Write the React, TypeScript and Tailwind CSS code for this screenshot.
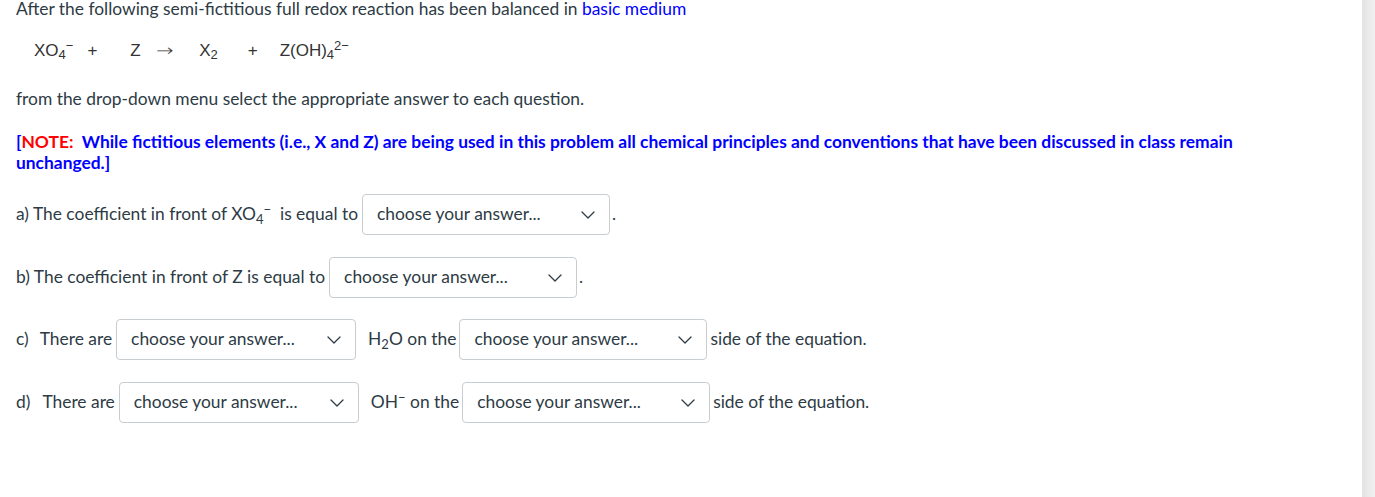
function Chevron() {
  return (
    <svg width="14" height="8" viewBox="0 0 14 8" fill="none" className="shrink-0">
      <polyline points="1,1 7,7 13,1" stroke="#2d3b45" strokeWidth="1.3" strokeLinecap="round" strokeLinejoin="round" />
    </svg>
  );
}

function Choice({ w }: { w: string }) {
  return (
    <div
      className={`${w} h-[41px] shrink-0 flex items-center justify-between border border-[#c7cdd1] rounded-[4px] bg-white pl-[14px] pr-[14px] text-[#2d3b45]`}
    >
      <span>choose your answer...</span>
      <Chevron />
    </div>
  );
}

export default function App() {
  return (
    <div className="flex w-full h-[497px] bg-white overflow-hidden">
      <div
        className="flex-1 pl-4 text-[17.4px] text-[#2d3b45]"
        style={{ fontFamily: "Lato, 'Liberation Sans', sans-serif" }}
      >
        <p className="leading-[18px]">
          After the following semi-fictitious full redox reaction has been balanced in{" "}
          <span className="text-[#0000ff]">basic medium</span>
        </p>

        <div
          className="mt-[22px] ml-[18px] flex items-baseline leading-[22px] text-[17px] text-[#333]"
          style={{ fontFamily: "'Liberation Sans', Arial, sans-serif" }}
        >
          <span>
            XO<sub className="text-[13px]">4</sub>
            <sup className="text-[13px]">−</sup>
          </span>
          <span className="ml-[14px]">+</span>
          <span className="ml-[33px]">Z</span>
          <span
            className="ml-[15px] inline-block origin-left scale-x-[1.3] text-[16px] font-light"
            style={{ fontFamily: "'DejaVu Sans', sans-serif" }}
          >
            →
          </span>
          <span className="ml-[30px]">
            X<sub className="text-[13px]">2</sub>
          </span>
          <span className="ml-[30px]">+</span>
          <span className="ml-[22px]">
            Z(OH)<sub className="text-[13px]">4</sub>
            <sup className="text-[13px]">2−</sup>
          </span>
        </div>

        <p className="mt-[27px] leading-[20px]">
          from the drop-down menu select the appropriate answer to each question.
        </p>

        <p className="mt-[22px] leading-[21px] font-bold text-[#0000ff] pr-[120px]">
          [<span className="text-[#ff0000]">NOTE:</span>&nbsp; While fictitious elements (i.e., X and Z) are being used in
          this problem all chemical principles and conventions that have been discussed in class remain unchanged.]
        </p>

        <div className="mt-[21px] flex items-center">
          <span>
            a)&nbsp;The coefficient in front of XO<sub className="text-[13px]">4</sub>
            <sup className="text-[13px]">−</sup>&nbsp; is equal to
          </span>
          <div className="ml-[4px]">
            <Choice w="w-[248px]" />
          </div>
          <span className="ml-[2px]">.</span>
        </div>

        <div className="mt-[22px] flex items-center">
          <span>b)&nbsp;The coefficient in front of Z is equal to</span>
          <div className="ml-[4px]">
            <Choice w="w-[248px]" />
          </div>
          <span className="ml-[2px]">.</span>
        </div>

        <div className="mt-[21px] flex items-center">
          <span>c)</span>
          <span className="ml-[11px]">There are</span>
          <div className="ml-[4px]">
            <Choice w="w-[240px]" />
          </div>
          <span className="ml-[12px]">
            H<sub className="text-[13px]">2</sub>O on the
          </span>
          <div className="ml-[3px]">
            <Choice w="w-[248px]" />
          </div>
          <span className="ml-[3px]">side of the equation.</span>
        </div>

        <div className="mt-[22px] flex items-center">
          <span>d)</span>
          <span className="ml-[12px]">There are</span>
          <div className="ml-[4px]">
            <Choice w="w-[240px]" />
          </div>
          <span className="ml-[12px]">
            OH<sup className="text-[13px]">−</sup> on the
          </span>
          <div className="ml-[3px]">
            <Choice w="w-[248px]" />
          </div>
          <span className="ml-[3px]">side of the equation.</span>
        </div>
      </div>
      <div className="w-[13px] h-full bg-gradient-to-r from-[#e3e3e3] to-[#f1f1f1]" />
    </div>
  );
}
